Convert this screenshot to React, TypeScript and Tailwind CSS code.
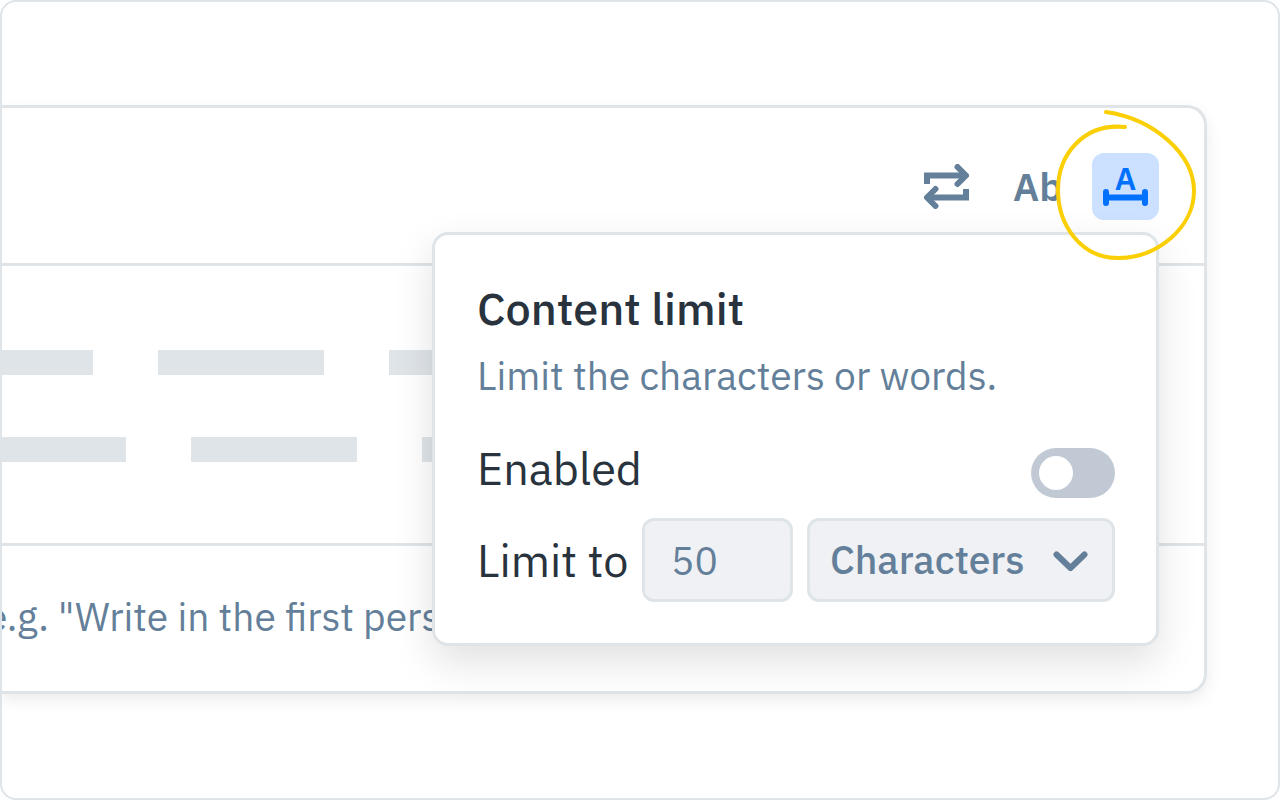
import * as React from "react"

const SwapIcon = () => {
  return (
    <svg
      width="46"
      height="45"
      viewBox="0 0 46 45"
      fill="none"
      stroke="currentColor"
      strokeWidth="6"
    >
      <path d="M4 20V11.5H42M43 25V33.5H5" />
      <path
        d="M34.5 3L43 11.5L34.5 20M12.5 25L4 33.5L12.5 42"
        strokeLinecap="round"
        strokeLinejoin="round"
      />
    </svg>
  )
}

const Highlight = () => {
  return (
    <svg
      className="pointer-events-none absolute -left-9 -top-11 z-20 max-w-none"
      width="144"
      height="154"
      viewBox="0 0 144 154"
      fill="none"
    >
      <path
        d="M50 3C98 10 138 45 138 82C138 118 102 149 62 149C24 149 2 115 2 81C2 45 28 14 69 18"
        stroke="#facf05"
        strokeWidth="4"
        strokeLinecap="round"
      />
    </svg>
  )
}

const Toolbar = () => {
  return (
    <div className="flex items-center justify-end border-b-3 border-[#dfe4e8] pb-[43px] pr-[45px] pt-[45px]">
      <button aria-label="Replace" className="mr-11 text-[#647f99]">
        <SwapIcon />
      </button>
      <button className="mr-[35px] w-11 overflow-hidden text-left text-[39px] font-semibold leading-[48px] text-[#647f99]">
        Ab
      </button>
      <div className="relative">
        <button
          aria-label="Content limit"
          className="flex h-[67px] w-[67px] flex-col items-center justify-center rounded-xl bg-[#cce0ff] text-[#0070ff]"
        >
          <span className="text-[32px] font-semibold leading-[22px]">A</span>
          <svg
            width="45"
            height="17"
            viewBox="0 0 45 17"
            stroke="currentColor"
            strokeWidth="6"
            strokeLinecap="round"
          >
            <path d="M3 3V14M42 3V14M3 8.5H42" />
          </svg>
        </button>
        <LimitPopover />
        <Highlight />
      </div>
    </div>
  )
}

const LimitPopover = () => {
  return (
    <div className="absolute right-0 top-full z-10 mt-3 w-[727px] rounded-2xl border-3 border-[#dfe4e8] bg-white pb-[41px] pl-[42px] pr-[41px] pt-[45px] text-[#28333e] shadow-[0_16px_40px_rgba(0,0,0,0.12)]">
      <h2 className="text-[45px] font-medium leading-[56px]">Content limit</h2>
      <p className="mt-[14px] text-[39px] leading-[52px] text-[#647f99]">
        Limit the characters or words.
      </p>
      <div className="mt-9 flex items-end justify-between">
        <label htmlFor="enabled" className="text-[45px] leading-[60px]">
          Enabled
        </label>
        <input
          id="enabled"
          type="checkbox"
          role="switch"
          className="h-[50px] w-[84px] appearance-none rounded-full bg-[#c1cad4] p-2 before:block before:size-[34px] before:rounded-full before:bg-white checked:bg-[#0070ff] checked:before:ml-auto"
        />
      </div>
      <div className="mt-5 flex items-center justify-between">
        <label htmlFor="limit" className="text-[45px] leading-[56px]">
          Limit to
        </label>
        <div className="flex gap-[14px]">
          <input
            id="limit"
            type="text"
            defaultValue="50"
            className="h-[84px] w-[151px] rounded-xl border-3 border-[#dfe4e8] bg-[#f0f1f5] px-[26px] text-[39px] text-[#647f99]"
          />
          <div className="relative">
            <select
              aria-label="Unit"
              className="h-[84px] w-[308px] appearance-none rounded-xl border-3 border-[#dfe4e8] bg-[#f0f1f5] pl-5 text-[39px] font-medium text-[#647f99]"
            >
              <option>Characters</option>
              <option>Words</option>
            </select>
            <svg
              className="pointer-events-none absolute right-[27px] top-8"
              width="35"
              height="23"
              viewBox="0 0 35 23"
              fill="none"
              stroke="#647f99"
              strokeWidth="6"
              strokeLinecap="round"
              strokeLinejoin="round"
            >
              <path d="M3.5 4.5L17.5 18L31.5 4.5" />
            </svg>
          </div>
        </div>
      </div>
    </div>
  )
}

const bar = "h-[25px] shrink-0 bg-[#dfe4e8]"

export default function App() {
  return (
    <div className="min-h-screen overflow-hidden rounded-2xl border-2 border-[#dfe4e8] bg-white pb-[104px] pr-[71px] pt-[103px] font-['IBM_Plex_Sans',Roboto,sans-serif]">
      <main className="rounded-r-[20px] border-y-3 border-r-3 border-[#dfe4e8] shadow-[0_6px_16px_rgba(0,0,0,0.08)]">
        <Toolbar />
        <div className="flex flex-col gap-[62px] overflow-hidden border-b-3 border-[#dfe4e8] pb-[81px] pt-[84px]">
          <div className="flex gap-[65px]">
            <div className={`${bar} w-[91px]`} />
            <div className={`${bar} w-[166px]`} />
            <div className={`${bar} w-[166px]`} />
          </div>
          <div className="flex gap-[65px]">
            <div className={`${bar} w-[124px]`} />
            <div className={`${bar} w-[166px]`} />
            <div className={`${bar} w-[166px]`} />
          </div>
        </div>
        <div className="overflow-hidden pb-12 pt-[45px]">
          <input
            type="text"
            aria-label="Instructions"
            placeholder={'e.g. "Write in the first person"'}
            className="-ml-4 block h-[52px] w-full text-[39px] placeholder:text-[#647f99] placeholder:opacity-100"
          />
        </div>
      </main>
    </div>
  )
}
